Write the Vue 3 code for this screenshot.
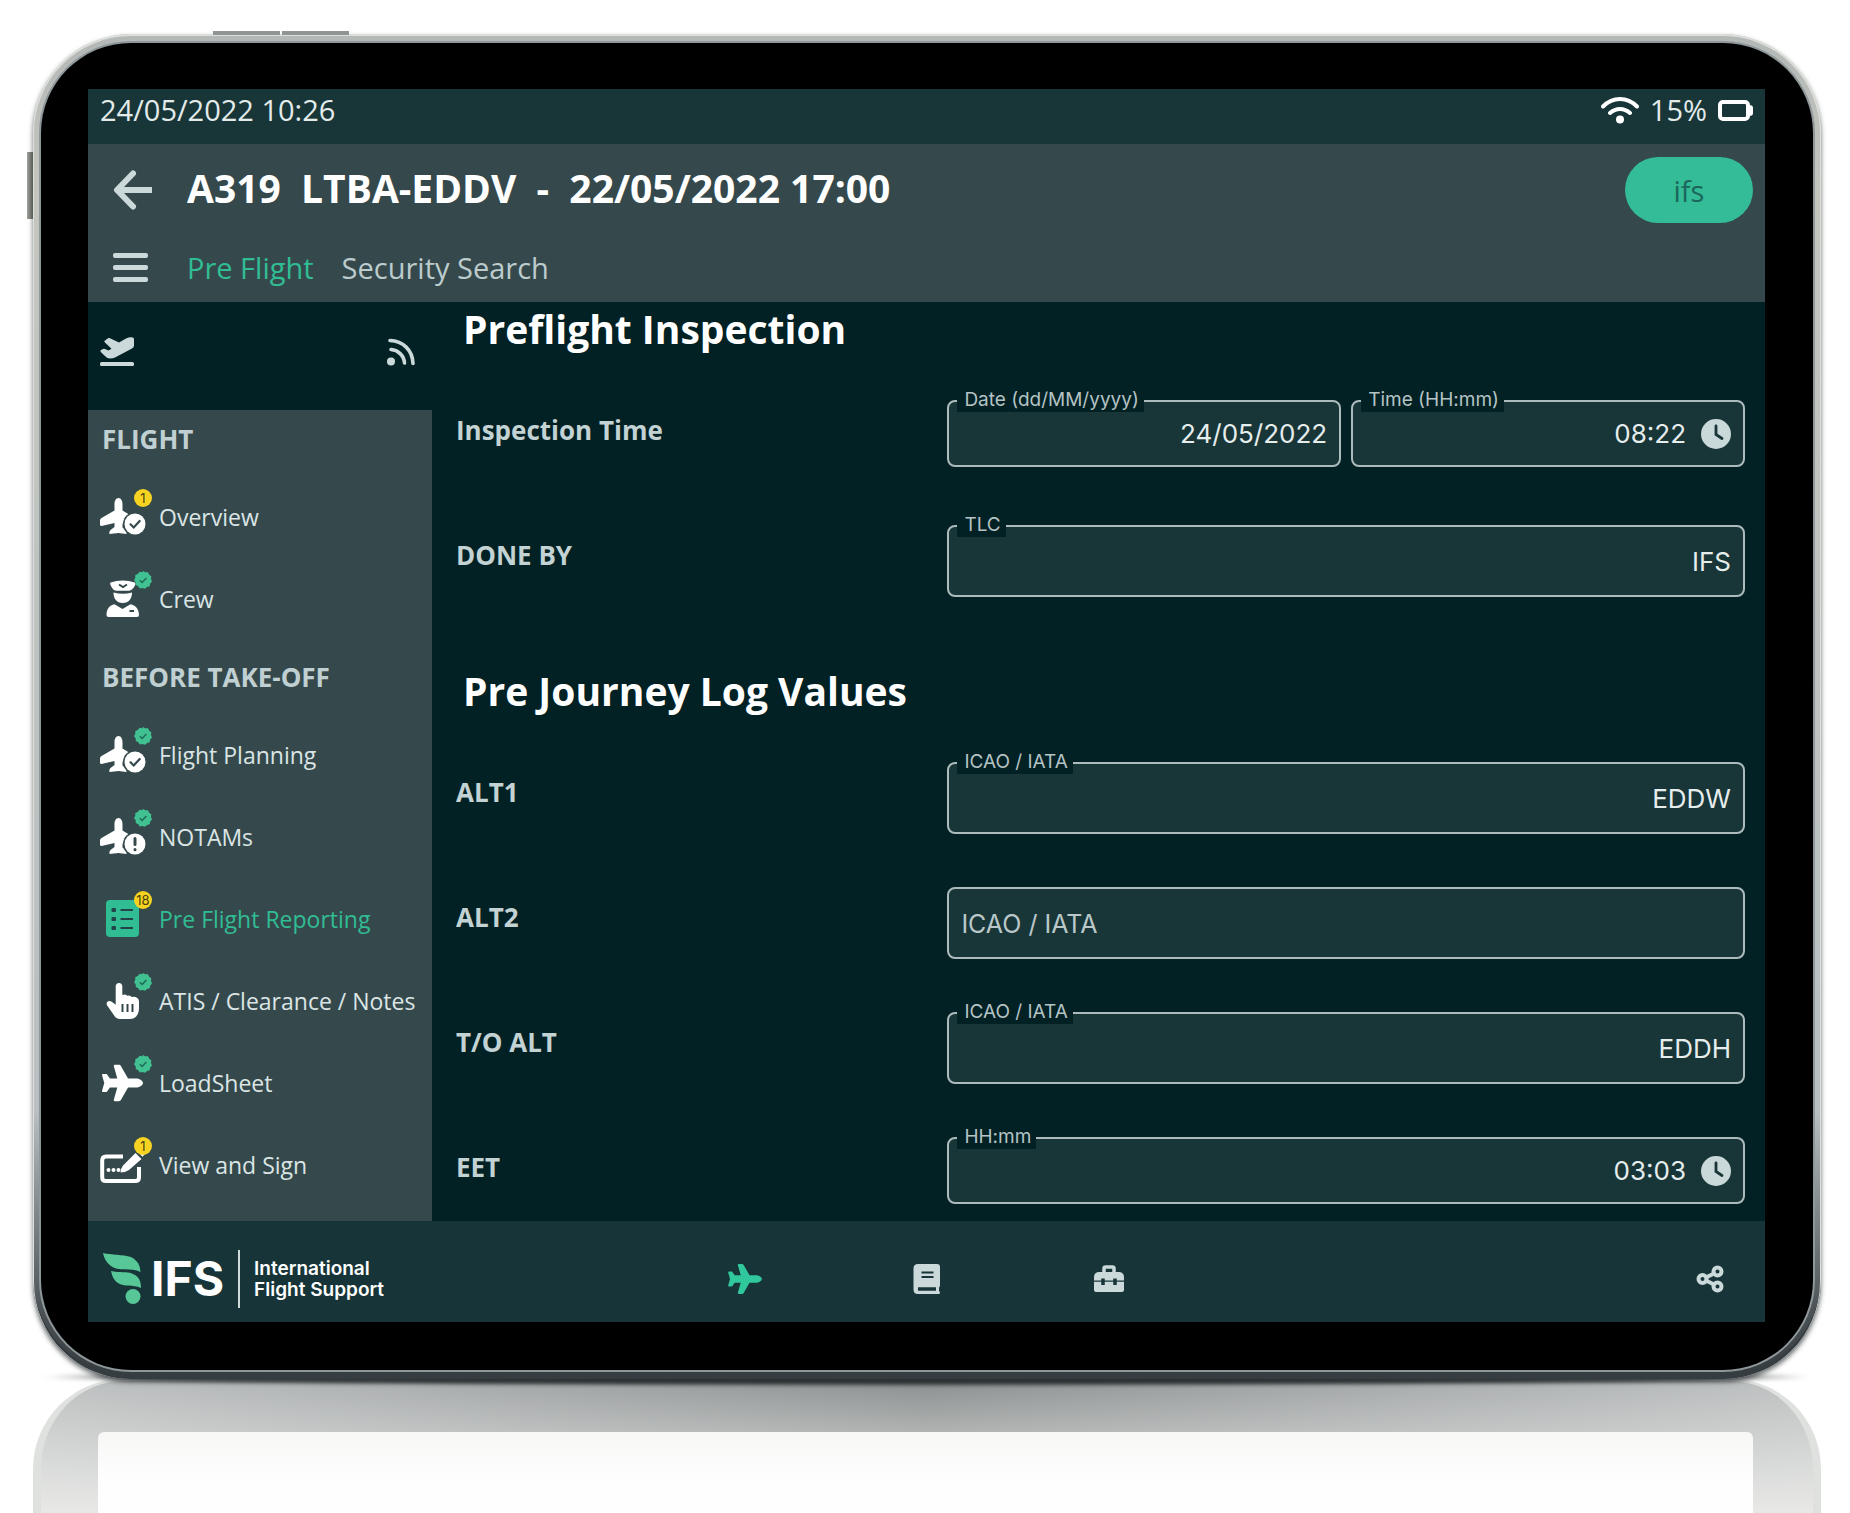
<script setup>
import { ref } from 'vue'

const tabs = ['Pre Flight', 'Security Search']
const activeTab = ref('Pre Flight')
const activeItem = ref('Pre Flight Reporting')

const groups = [
  {
    title: 'FLIGHT',
    items: [
      { label: 'Overview', icon: 'plane-check', count: '1' },
      { label: 'Crew', icon: 'pilot' },
    ],
  },
  {
    title: 'BEFORE TAKE-OFF',
    items: [
      { label: 'Flight Planning', icon: 'plane-check' },
      { label: 'NOTAMs', icon: 'plane-alert' },
      { label: 'Pre Flight Reporting', icon: 'list', count: '18' },
      { label: 'ATIS / Clearance / Notes', icon: 'hand' },
      { label: 'LoadSheet', icon: 'plane' },
      { label: 'View and Sign', icon: 'sign', count: '1' },
    ],
  },
]

const sections = ref([
  {
    title: 'Preflight Inspection',
    rows: [
      {
        label: 'Inspection Time',
        fields: [
          { id: 'inspection-date', label: 'Date (dd/MM/yyyy)', value: '24/05/2022', short: true },
          { id: 'inspection-time', label: 'Time (HH:mm)', value: '08:22', short: true, clock: true },
        ],
      },
      { label: 'DONE BY', fields: [{ id: 'done-by', label: 'TLC', value: 'IFS' }] },
    ],
  },
  {
    title: 'Pre Journey Log Values',
    rows: [
      { label: 'ALT1', fields: [{ id: 'alt1', label: 'ICAO / IATA', value: 'EDDW' }] },
      { label: 'ALT2', fields: [{ id: 'alt2', placeholder: 'ICAO / IATA', value: '' }] },
      { label: 'T/O ALT', fields: [{ id: 'to-alt', label: 'ICAO / IATA', value: 'EDDH' }] },
      { label: 'EET', fields: [{ id: 'eet', label: 'HH:mm', value: '03:03', short: true, clock: true }] },
    ],
  },
])

const planePath =
  'M482.3 192c34.2 0 93.7 29 93.7 64c0 36-59.5 64-93.7 64l-116.6 0L265.2 495.9c-5.7 10-16.3 16.1-27.8 16.1l-56.2 0c-10.6 0-18.3-10.2-15.4-20.4l49-171.6L112 320 68.8 377.6c-3 4-7.8 6.4-12.8 6.4l-42 0c-7.8 0-14-6.3-14-14c0-1.3 .2-2.6 .5-3.9L32 256 .5 145.9c-.4-1.3-.5-2.6-.5-3.9c0-7.8 6.3-14 14-14l42 0c5 0 9.8 2.4 12.8 6.4L112 192l102.9 0-49-171.6C162.9 10.2 170.6 0 181.2 0l56.2 0c11.5 0 22.1 6.2 27.8 16.1L365.7 192l116.6 0z'
</script>

<template>
  <div class="stage">
    <div class="tablet">
      <i class="key key-up"></i>
      <i class="key key-down"></i>
      <i class="key key-side"></i>
      <div class="bezel">
        <div class="screen">
          <div class="status">
            <span>24/05/2022 10:26</span>
            <span class="status-right">
              <svg class="wifi" viewBox="0 0 38 28" fill="none" stroke="#fff" stroke-width="4" stroke-linecap="round">
                <path d="M2 10.500C12 .500 26 .500 36 10.500M9 17C15 11.500 23 11.500 29 17" />
                <circle cx="19" cy="23.500" r="4" fill="#fff" stroke="none" />
              </svg>
              <span>15%</span>
              <svg class="battery" viewBox="0 0 35 21">
                <rect x="2" y="2" width="28" height="17" rx="3" fill="none" stroke="#fff" stroke-width="4" />
                <path d="M31 5c3 0 4 1 4 3v5c0 2-1 3-4 3z" fill="#fff" />
              </svg>
            </span>
          </div>

          <header class="header">
            <div class="header-row title-row">
              <button class="icon-btn" aria-label="Back">
                <svg width="40" height="40" viewBox="0 0 40 40" fill="none" stroke="#cbd9da" stroke-width="6" stroke-linecap="round" stroke-linejoin="round">
                  <path d="M20 3.500 4 20 20 36.500" />
                  <path d="M5 20H39" stroke-linecap="butt" />
                </svg>
              </button>
              <h1>A319&nbsp; LTBA-EDDV&nbsp; -&nbsp; 22/05/2022 17:00</h1>
              <button class="pill">ifs</button>
            </div>
            <div class="header-row tab-row">
              <button class="icon-btn" aria-label="Menu">
                <svg width="36" height="32" viewBox="0 0 36 32" fill="#cbd9da">
                  <rect y="1" width="35" height="5" rx="2" />
                  <rect y="13" width="35" height="5" rx="2" />
                  <rect y="25" width="35" height="5" rx="2" />
                </svg>
              </button>
              <nav class="tabs">
                <a v-for="t in tabs" :key="t" href="#" :class="{ active: t === activeTab }" @click.prevent="activeTab = t">{{ t }}</a>
              </nav>
            </div>
          </header>

          <div class="body">
            <aside class="sidebar">
              <div class="side-top">
                <svg width="34" height="30" viewBox="0 0 34 30" fill="#cbd9da">
                  <path d="M5 3.500 8 1.200q1-.6 2 0L19 5.500 26 1.500q4-2 7-1 1 .5 1 2v6q0 2-2 3L15 20.500q-2 1-5 1-3 0-4.500-2L.8 15q-.8-1.200.2-2l2-1q1-.5 2 0l3.500 1.500 3-1.700L4.700 5.300q-.8-1 .3-1.800z" />
                  <rect y="25" width="34" height="4" rx="1.500" />
                </svg>
                <svg width="28" height="28" viewBox="0 0 28 28" fill="none" stroke="#cbd9da" stroke-width="3.600" stroke-linecap="round">
                  <path d="M3 2.500C16 3 25.500 12 26 25.500M4 11.500c7 .5 13 6 13.500 13.500" />
                  <circle cx="4" cy="23.500" r="4" fill="#cbd9da" stroke="none" />
                </svg>
              </div>
              <nav class="menu">
                <section v-for="g in groups" :key="g.title" class="group">
                  <h2>{{ g.title }}</h2>
                  <a
                    v-for="it in g.items"
                    :key="it.label"
                    href="#"
                    class="item"
                    :class="{ active: it.label === activeItem }"
                    @click.prevent="activeItem = it.label"
                  >
                    <span class="item-icon">
                      <svg v-if="it.icon.startsWith('plane-')" width="46" height="38" viewBox="0 0 46 38">
                        <path
                          fill="currentColor"
                          d="M18.500 0c2.600 0 4 3 4 6v6.500l9 5.500v9L22.500 25.500v4l4 3.800v2.700q-4-.6-8-1-4.500.6-9 1-.6-2.600 1-4l4-3V25L1.500 28Q0 28 0 26.500V22.500q0-1.700 1.500-2.500l13-7.500V6c0-3 1.400-6 4-6z"
                        />
                        <circle cx="35" cy="26" r="12" fill="#35494c" />
                        <circle cx="35" cy="26" r="10.500" fill="currentColor" />
                        <path v-if="it.icon === 'plane-check'" d="m30.500 26.300 3.200 3.200 6-6.500" fill="none" stroke="#35494c" stroke-width="2.200" stroke-linecap="round" />
                        <path v-else d="M35 20.500v6M35 31.500v.2" fill="none" stroke="#35494c" stroke-width="3" stroke-linecap="round" />
                      </svg>
                      <svg v-else-if="it.icon === 'pilot'" width="46" height="38" viewBox="0 0 46 38">
                        <g fill="currentColor">
                          <path d="M10.500 2.500Q22.500-1.500 35 2.500c1 1 .3 3-2 6q-1.500 2-4 2.300h-13q-2.500-.3-3.500-2.300c-2-3-2.800-5-2-6z" />
                          <path d="M13.500 12.500q9.500 2.500 18.500 0c0 6-3 10.500-9.200 10.500s-9.300-4.500-9.300-10.500z" />
                          <path d="M6.500 35c0-6 3-9.800 8-10.800L22.500 29l8-4.800c5 1 8.500 4.800 8.500 10.800q0 2-2 2h-28.500q-2 0-2-2z" />
                        </g>
                        <path d="m19 4.500 4 2.500 4-2.500" fill="none" stroke="#35494c" stroke-width="2" />
                        <path d="M29.500 31h4.500" stroke="#35494c" stroke-width="2" />
                      </svg>
                      <svg v-else-if="it.icon === 'list'" width="46" height="38" viewBox="0 0 46 38">
                        <rect x="6" y="0" width="33" height="37" rx="4" fill="currentColor" />
                        <g fill="#24444a">
                          <rect x="11.500" y="8" width="4.500" height="4" rx="1" />
                          <rect x="11.500" y="17" width="4.500" height="4" rx="1" />
                          <rect x="11.500" y="26" width="4.500" height="4" rx="1" />
                          <rect x="20.500" y="9" width="12.500" height="2" />
                          <rect x="20.500" y="18" width="12.500" height="2" />
                          <rect x="20.500" y="27" width="12.500" height="2" />
                        </g>
                      </svg>
                      <svg v-else-if="it.icon === 'hand'" width="46" height="38" viewBox="0 0 46 38">
                        <path
                          fill="currentColor"
                          d="M19 1c2 0 3.300 1.500 3.300 3.300V13q3-1.500 5 .8 3-1 4.500 1.200 3-1 5.500 1 1.700 1 1.700 3.500v7c0 6-3.500 10.500-9 10.500H20q-3.500 0-5.500-3L7.200 23.500c-2-3 1.500-6 4.500-3.700l4 3V4.300C15.700 2.500 17 1 19 1z"
                        />
                        <path d="M22.500 22v8M27.500 22v8M32.500 22v8" stroke="#35494c" stroke-width="2" />
                      </svg>
                      <svg v-else-if="it.icon === 'plane'" width="46" height="38" viewBox="-28 -11 646 534">
                        <path :d="planePath" fill="currentColor" />
                      </svg>
                      <svg v-else width="46" height="38" viewBox="0 0 46 38">
                        <path d="M23 10.500H6Q2.200 10.500 2.200 14.500v17Q2.200 35 6 35H35Q39 35 39 31.500V21" fill="none" stroke="currentColor" stroke-width="4" />
                        <path d="M20.500 26.500q.5-4.500 2.500-7L35.500 7l6 6L29 24q-4 2.500-8.500 2.500zM37.500 5.500 40 3.200q3-1.500 5 1 1 2.500-.5 4.300l-2 2.300z" fill="currentColor" />
                        <g fill="currentColor">
                          <circle cx="8.500" cy="24" r="2" />
                          <circle cx="13.500" cy="24" r="2" />
                          <circle cx="18.500" cy="24" r="2" />
                        </g>
                      </svg>
                      <span v-if="it.count" class="badge">{{ it.count }}</span>
                      <svg v-else class="badge-ok" viewBox="0 0 18 18">
                        <path
                          fill="#41c191"
                          d="M9 0 11.300 1.300 14 1.200 15.200 3.700 17.300 5.300 17 8 18 10.500 16.200 12.500 15.700 15.200 13 15.900 11 17.800 8.500 17 5.800 17.400 4.300 15.200 1.800 14 1.700 11.300 0 9.200 1.300 6.800 1.300 4 3.800 2.900 5.500.8 8.100 1.200z"
                        />
                        <path d="m5.800 9.200 2.300 2.300 4.300-4.500" fill="none" stroke="#1d6a56" stroke-width="1.500" />
                      </svg>
                    </span>
                    <span>{{ it.label }}</span>
                  </a>
                </section>
              </nav>
            </aside>

            <main class="content">
              <section v-for="s in sections" :key="s.title" class="panel">
                <h2>{{ s.title }}</h2>
                <div class="rows">
                  <div v-for="r in s.rows" :key="r.label" class="row">
                    <label class="row-label" :for="r.fields[0].id">{{ r.label }}</label>
                    <div class="fields">
                      <div v-for="f in r.fields" :key="f.id" class="field" :class="{ short: f.short }">
                        <input :id="f.id" v-model="f.value" type="text" :placeholder="f.placeholder" />
                        <label v-if="f.label" class="float" :for="f.id">{{ f.label }}</label>
                        <svg v-if="f.clock" class="clock" width="32" height="32" viewBox="0 0 32 32">
                          <circle cx="16" cy="16" r="15" fill="#c9d8d9" />
                          <path d="M16 8v8.500l6 4" fill="none" stroke="#1a3538" stroke-width="2.800" stroke-linecap="round" />
                        </svg>
                      </div>
                    </div>
                  </div>
                </div>
              </section>
            </main>
          </div>

          <footer class="footer">
            <div class="brand">
              <svg width="40" height="52" viewBox="0 0 40 52" fill="#58c797">
                <path d="M0 0C8 2 20 1.500 28 4q9 4 9.500 15C28 14 15 19 8 13 2 8 1 4 0 0z" />
                <path d="M8 18c8 2 16 0 22 3 6 2.500 8 7 8 14-8-4-17-.5-23-5-5-3.500-6-8-7-12z" />
                <circle cx="30" cy="43.500" r="7.500" />
              </svg>
              <strong>IFS</strong>
              <span class="tagline">International<br />Flight Support</span>
            </div>
            <nav class="dock">
              <button class="icon-btn" aria-label="Flights">
                <svg width="34" height="30" viewBox="0 0 576 512"><path :d="planePath" fill="#2fc79b" /></svg>
              </button>
              <button class="icon-btn" aria-label="Library">
                <svg width="34" height="30" viewBox="0 0 34 30">
                  <path d="M8 0H27q3 0 3 3V21q0 2-1 2.500V27q1 .5 1 1.500T29 30H8q-4.500 0-4.500-4.500v-21Q3.500 0 8 0z" fill="#cbd9da" />
                  <path d="M11.500 8.500h12M11.500 13h12" stroke="#173538" stroke-width="1.800" />
                  <path d="M8 25h18" stroke="#173538" stroke-width="3.500" />
                </svg>
              </button>
              <button class="icon-btn" aria-label="Toolbox">
                <svg width="34" height="30" viewBox="0 0 34 30">
                  <path d="M12 8V4.500Q12 3 13.500 3H20.500Q22 3 22 4.500V8" fill="none" stroke="#cbd9da" stroke-width="3.500" />
                  <path d="M6 8H28q4 1 4 5v3.500H2V13q0-4 4-5zM2 17.800H32v8.200q0 2-2 2H4q-2 0-2-2z" fill="#cbd9da" />
                  <path d="M11 14.500v6.500M23 14.500v6.500" stroke="#173538" stroke-width="3.500" />
                </svg>
              </button>
            </nav>
            <button class="icon-btn share" aria-label="Share">
              <svg width="28" height="28" viewBox="0 0 28 28" fill="none" stroke="#cbd9da" stroke-width="4">
                <circle cx="6.500" cy="14" r="4" />
                <circle cx="21.500" cy="6.500" r="4" />
                <circle cx="21.500" cy="21.500" r="4" />
                <path d="m10 12.500 8-4M10 15.500l8 4" />
              </svg>
            </button>
          </footer>
        </div>
      </div>
    </div>
    <div class="reflection">
      <div class="reflection-body"><div class="reflection-screen"></div></div>
    </div>
  </div>
</template>

<style>
body {
  margin: 0;
  background: #fff;
}
</style>

<style scoped>
* {
  box-sizing: border-box;
}
.stage {
  display: flex;
  flex-direction: column;
  min-height: 100vh;
  padding: 34px 29px 0 33px;
  font-family: 'Open Sans', 'Noto Sans', sans-serif;
  color: #e3ebeb;
}
button {
  border: 0;
  padding: 0;
  background: none;
  font: inherit;
  cursor: pointer;
}
a {
  color: inherit;
  text-decoration: none;
}
svg {
  display: block;
  flex: none;
}
h1,
h2 {
  margin: 0;
}

/* Device frame */
.tablet {
  position: relative;
  z-index: 1;
  padding: 9px 8px;
  border-radius: 98px;
  background: linear-gradient(180deg, #b4b8b6 0, #c4c6be 12%, #b9bfc2 80%, #4a5256 95%, #343b3f 100%);
  box-shadow:
    inset 0 1px 0 1px #dcdfda,
    inset 0 -4px 0 0 #363d41,
    0 3px 5px rgba(40, 46, 48, 0.7);
}
.bezel {
  padding: 46px 48px 48px 47px;
  border-radius: 90px;
  background: #000;
  box-shadow: 0 0 0 2px #8e979a;
}
.key {
  position: absolute;
  background: #8f9593;
}
.key-up,
.key-down {
  top: -3px;
  width: 67px;
  height: 4px;
}
.key-up {
  left: 180px;
}
.key-down {
  left: 249px;
}
.key-side {
  left: -6px;
  top: 118px;
  width: 6px;
  height: 67px;
  background: linear-gradient(90deg, #a0a39c, #565a54);
}
.screen {
  background: #012124;
}

/* Status bar */
.status {
  display: flex;
  justify-content: space-between;
  height: 55px;
  padding: 0 12px;
  background: #183638;
  font-size: 29px;
  line-height: 42px;
}
.status-right {
  display: flex;
  align-items: center;
  height: 42px;
  gap: 11px;
}
.wifi {
  width: 38px;
  height: 28px;
}
.battery {
  width: 35px;
  height: 21px;
}

/* Header */
.header {
  padding: 0 12px 2px 25px;
  background: #35494c;
}
.header-row {
  display: flex;
  align-items: center;
}
.title-row {
  height: 92px;
}
.tab-row {
  height: 64px;
}
.header-row .icon-btn {
  width: 74px;
}
h1 {
  flex: 1;
  padding-bottom: 4px;
  font-size: 39px;
  line-height: 52px;
  font-weight: 700;
  color: #fff;
}
.pill {
  width: 128px;
  height: 66px;
  border-radius: 33px;
  background: #33bc95;
  color: #1a675c;
  font-size: 29px;
}
.tabs {
  display: flex;
  gap: 28px;
  font-size: 29px;
  line-height: 40px;
  color: #bccbcc;
}
.tabs .active {
  color: #31bd94;
}

/* Sidebar */
.body {
  display: flex;
}
.sidebar {
  width: 344px;
  flex: none;
  background: #35494c;
}
.side-top {
  display: flex;
  justify-content: space-between;
  align-items: center;
  height: 108px;
  padding: 0 17px 8px 12px;
  background: #012124;
}
.group + .group {
  margin-top: 8px;
}
.group h2 {
  padding-left: 14px;
  margin-bottom: 8px;
  font-size: 26px;
  line-height: 58px;
  font-weight: 700;
  color: #c0d0d2;
}
.item {
  display: flex;
  align-items: center;
  gap: 13px;
  height: 82px;
  padding-left: 12px;
  font-size: 23px;
  white-space: nowrap;
  color: #dbe5e5;
}
.item.active {
  color: #31bd94;
}
.item-icon {
  position: relative;
  color: #fff;
}
.active .item-icon {
  color: #31bd94;
}
.badge,
.badge-ok {
  position: absolute;
  left: 34px;
  top: -9px;
  width: 18px;
  height: 18px;
}
.badge {
  border-radius: 50%;
  background: #f7d321;
  color: #4a3f10;
  font: 13px/18px Inter, sans-serif;
  text-align: center;
}

/* Form */
.content {
  flex: 1;
  padding: 0 20px 10px 24px;
}
.panel + .panel {
  margin-top: 65px;
}
.panel h2 {
  padding-left: 7px;
  margin-bottom: 44px;
  font-size: 39px;
  line-height: 54px;
  font-weight: 700;
  color: #fff;
}
.rows {
  display: flex;
  flex-direction: column;
  gap: 51px;
}
.row {
  display: grid;
  grid-template-columns: 491fr 797fr;
  align-items: start;
  min-height: 74px;
}
.row-label {
  font-size: 26px;
  line-height: 60px;
  font-weight: 700;
  color: #c3d2d3;
}
.fields {
  display: flex;
  gap: 10px;
}
.field {
  position: relative;
  flex: 1;
}
.field input {
  display: block;
  width: 100%;
  height: 72px;
  padding: 0 12px;
  border: 2px solid #adbbbc;
  border-radius: 8px;
  outline: none;
  background: #183638;
  color: #e6eded;
  font: 26px Inter, sans-serif;
  text-align: right;
}
.field.short input {
  height: 67px;
}
.field input::placeholder {
  color: #bac8c9;
  opacity: 1;
  font-size: 25px;
  text-align: left;
}
.field input:placeholder-shown {
  text-align: left;
}
.float {
  position: absolute;
  left: 10px;
  top: -12px;
  padding: 0 5px 0 7px;
  background: #012124;
  color: #b5c3c4;
  font: 19px/24px Inter, sans-serif;
}
.clock {
  position: absolute;
  right: 13px;
  top: 18px;
}
.field:has(.clock) input {
  padding-right: 57px;
}

/* Footer */
.footer {
  display: grid;
  grid-template-columns: 1fr auto 1fr;
  align-items: center;
  height: 101px;
  padding: 14px 15px 0;
  background: #173538;
}
.brand {
  display: flex;
  align-items: center;
  color: #fff;
  font-family: Inter, sans-serif;
}
.brand strong {
  margin: 0 14px 0 8px;
  font-size: 48px;
  line-height: 58px;
}
.tagline {
  padding: 8px 0 8px 14px;
  border-left: 2px solid #cfdada;
  font-size: 19px;
  line-height: 21px;
  font-weight: 600;
}
.dock {
  display: flex;
  gap: 148px;
}
.share {
  justify-self: end;
  margin-right: 26px;
}

/* Mirror image on the table top */
.reflection {
  position: relative;
  display: flex;
  flex: 1;
  min-height: 134px;
}
.reflection::before {
  content: '';
  position: absolute;
  top: -10px;
  right: 8px;
  left: 8px;
  height: 16px;
  background: radial-gradient(closest-side, #2f3436 0, #2f3436 88%, rgba(47, 52, 54, 0) 100%);
  filter: blur(2px);
}
.reflection-body {
  display: flex;
  flex: 1;
  padding: 51px 60px 0 57px;
  border: solid #dfe1df;
  border-width: 2px 8px 0;
  border-radius: 90px 90px 0 0;
  background:
    linear-gradient(180deg, rgba(232, 233, 231, 0) 0, rgba(232, 233, 231, 1) 100%),
    linear-gradient(90deg, #bfc2c2 0, #b0b3b4 15%, #8c9090 50%, #b0b3b4 85%, #bfc2c2 100%);
}
.reflection-screen {
  flex: 1;
  border-radius: 6px 6px 0 0;
  background: linear-gradient(180deg, #f7f7f6, #fefefe 50px);
}
</style>
